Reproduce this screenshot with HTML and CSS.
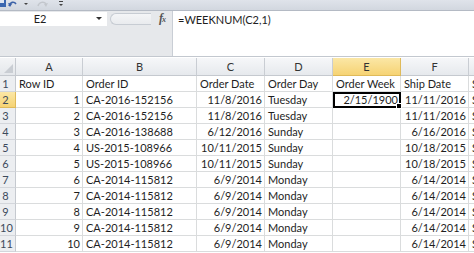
FILE: index.html
```html
<!DOCTYPE HTML>
<html lang="en">
<head>
    <meta charset="UTF-8">
    <title>Book1 - Excel</title>
    <link rel="stylesheet" href="styles.css">
</head>
<body>
    <div class="ribbon">
        <svg class="qat" width="70" height="10" viewBox="0 0 70 10">
            <!-- save -->
            <rect x="-2" y="-1" width="8" height="8" fill="#3b67b0"/>
            <rect x="0" y="0" width="4" height="3" fill="#dfe6f2"/>
            <!-- undo -->
            <path d="M9 6 C10 2 14 1 16 4" stroke="#3c62a8" stroke-width="1.6" fill="none"/>
            <path d="M8 3 L10 7 L12 4 Z" fill="#3c62a8"/>
            <path d="M24 3 L28 3 L26 5 Z" fill="#444"/>
            <!-- redo (disabled) -->
            <path d="M38 6 C39 2 44 1 46 4" stroke="#c3c7cd" stroke-width="1.4" fill="none"/>
            <path d="M48 3 L46 7 L44 4 Z" fill="#c3c7cd"/>
            <!-- customize -->
            <rect x="59" y="1" width="4" height="1" fill="#444"/>
            <path d="M59 4 L63 4 L61 6 Z" fill="#444"/>
        </svg>
    </div>

    <div class="formula-bar">
        <div class="formula-left">
            <div class="name-row">
                <div class="name-box">
                    <span class="name">E2</span>
                    <span class="caret"></span>
                </div>
                <div class="pill"></div>
                <div class="fx"><i>f</i><i class="fx-x">x</i></div>
            </div>
        </div>
        <div class="formula-input">=WEEKNUM(C2,1)</div>
    </div>

    <div class="sheet">
        <div class="corner"></div>
        <div class="col-head">A</div>
        <div class="col-head">B</div>
        <div class="col-head">C</div>
        <div class="col-head">D</div>
        <div class="col-head selected">E</div>
        <div class="col-head">F</div>
        <div class="col-head">G</div>

        <div class="row-head">1</div>
        <div class="cell">Row ID</div>
        <div class="cell">Order ID</div>
        <div class="cell">Order Date</div>
        <div class="cell">Order Day</div>
        <div class="cell">Order Week</div>
        <div class="cell">Ship Date</div>
        <div class="cell">Ship Mode</div>

        <div class="row-head selected">2</div>
        <div class="cell num">1</div>
        <div class="cell">CA-2016-152156</div>
        <div class="cell num">11/8/2016</div>
        <div class="cell">Tuesday</div>
        <div class="cell num active">2/15/1900</div>
        <div class="cell num">11/11/2016</div>
        <div class="cell">Second Class</div>

        <div class="row-head">3</div>
        <div class="cell num">2</div>
        <div class="cell">CA-2016-152156</div>
        <div class="cell num">11/8/2016</div>
        <div class="cell">Tuesday</div>
        <div class="cell"></div>
        <div class="cell num">11/11/2016</div>
        <div class="cell">Second Class</div>

        <div class="row-head">4</div>
        <div class="cell num">3</div>
        <div class="cell">CA-2016-138688</div>
        <div class="cell num">6/12/2016</div>
        <div class="cell">Sunday</div>
        <div class="cell"></div>
        <div class="cell num">6/16/2016</div>
        <div class="cell">Second Class</div>

        <div class="row-head">5</div>
        <div class="cell num">4</div>
        <div class="cell">US-2015-108966</div>
        <div class="cell num">10/11/2015</div>
        <div class="cell">Sunday</div>
        <div class="cell"></div>
        <div class="cell num">10/18/2015</div>
        <div class="cell">Standard Class</div>

        <div class="row-head">6</div>
        <div class="cell num">5</div>
        <div class="cell">US-2015-108966</div>
        <div class="cell num">10/11/2015</div>
        <div class="cell">Sunday</div>
        <div class="cell"></div>
        <div class="cell num">10/18/2015</div>
        <div class="cell">Standard Class</div>

        <div class="row-head">7</div>
        <div class="cell num">6</div>
        <div class="cell">CA-2014-115812</div>
        <div class="cell num">6/9/2014</div>
        <div class="cell">Monday</div>
        <div class="cell"></div>
        <div class="cell num">6/14/2014</div>
        <div class="cell">Standard Class</div>

        <div class="row-head">8</div>
        <div class="cell num">7</div>
        <div class="cell">CA-2014-115812</div>
        <div class="cell num">6/9/2014</div>
        <div class="cell">Monday</div>
        <div class="cell"></div>
        <div class="cell num">6/14/2014</div>
        <div class="cell">Standard Class</div>

        <div class="row-head">9</div>
        <div class="cell num">8</div>
        <div class="cell">CA-2014-115812</div>
        <div class="cell num">6/9/2014</div>
        <div class="cell">Monday</div>
        <div class="cell"></div>
        <div class="cell num">6/14/2014</div>
        <div class="cell">Standard Class</div>

        <div class="row-head">10</div>
        <div class="cell num">9</div>
        <div class="cell">CA-2014-115812</div>
        <div class="cell num">6/9/2014</div>
        <div class="cell">Monday</div>
        <div class="cell"></div>
        <div class="cell num">6/14/2014</div>
        <div class="cell">Standard Class</div>

        <div class="row-head">11</div>
        <div class="cell num">10</div>
        <div class="cell">CA-2014-115812</div>
        <div class="cell num">6/9/2014</div>
        <div class="cell">Monday</div>
        <div class="cell"></div>
        <div class="cell num">6/14/2014</div>
        <div class="cell">Standard Class</div>
    </div>
</body>
</html>
```

FILE: styles.css
```css
body {
    margin: 0;
    width: 474px;
    height: 253px;
    overflow: hidden;
    background-color: #ffffff;
    font-family: Lato, 'Open Sans', sans-serif;
    font-size: 11px;
    color: #1e1e1e;
}

/* Quick access toolbar strip */
.ribbon {
    height: 10px;
    background: linear-gradient(#dfe3ea, #d2d7df);
    border-bottom: 1px solid #b4bac4;
    overflow: hidden;
}

.qat {
    display: block;
}

/* Formula bar */
.formula-bar {
    display: flex;
    height: 45px;
    border-bottom: 1px solid #c3c8cf;
    background-color: #e6e8eb;
}

.formula-left {
    width: 172px;
    flex-shrink: 0;
}

.name-row {
    display: flex;
    align-items: center;
    height: 15px;
}

.name-box {
    display: flex;
    align-items: center;
    width: 107px;
    height: 14px;
    background-color: #ffffff;
}

.name {
    flex: 1;
    text-align: center;
    padding-right: 16px;
}

.caret {
    width: 0;
    height: 0;
    margin-right: 5px;
    border-left: 3px solid transparent;
    border-right: 3px solid transparent;
    border-top: 3px solid #333;
}

.pill {
    width: 40px;
    height: 10px;
    margin-left: 3px;
    border: 1px solid #c7ccd3;
    border-right: none;
    border-radius: 6px 0 0 6px;
    background: linear-gradient(#f4f5f7, #e9ebee);
}

.fx {
    margin-left: 8px;
    font-family: 'Liberation Serif', serif;
    font-size: 12px;
    font-weight: bold;
    color: #555;
    letter-spacing: -1px;
}

.fx-x {
    font-size: 8px;
}

.formula-input {
    flex: 1;
    background-color: #ffffff;
    border-left: 1px solid #c9ced5;
    padding: 2px 0 0 5px;
    line-height: 13px;
}

/* Worksheet grid */
.sheet {
    display: grid;
    grid-template-columns: 16px 67px 114px 68px 68px 68px 68px 80px;
    grid-template-rows: 18px;
    grid-auto-rows: 16px;
    margin-top: 1px;
    width: 474px;
    overflow: hidden;
}

.sheet > div {
    box-sizing: border-box;
    white-space: nowrap;
    overflow: hidden;
}

.corner {
    position: relative;
    background: linear-gradient(#f3f4f6, #e4e7eb);
    border-right: 1px solid #c5c9cf;
    border-bottom: 1px solid #c5c9cf;
}

.corner:after {
    content: "";
    position: absolute;
    right: 2px;
    bottom: 2px;
    border-left: 9px solid transparent;
    border-bottom: 9px solid #c9cdd3;
}

.col-head {
    text-align: center;
    line-height: 17px;
    color: #333;
    background: linear-gradient(#f6f7f9, #e6e9ed);
    border-right: 1px solid #c9cdd3;
    border-bottom: 1px solid #c5c9cf;
}

.row-head {
    text-align: center;
    padding-right: 4px;
    line-height: 15px;
    color: #3c4a5c;
    background-color: #eceef1;
    border-right: 1px solid #c5c9cf;
    border-bottom: 1px solid #d3d6db;
}

.col-head.selected,
.row-head.selected {
    background: linear-gradient(#fbe7a6, #f6d374);
    border-color: #dfba5a;
}

.cell {
    padding: 0 2px 0 3px;
    line-height: 16px;
    border-right: 1px solid #dadcdd;
    border-bottom: 1px solid #dadcdd;
}

.cell.num {
    text-align: right;
}

.cell.active {
    position: relative;
    overflow: visible;
    outline: 2px solid #000000;
    outline-offset: -2px;
}

.cell.active:after {
    content: "";
    position: absolute;
    right: -2px;
    bottom: -2px;
    width: 4px;
    height: 4px;
    background-color: #000000;
    border: 1px solid #ffffff;
}
```
